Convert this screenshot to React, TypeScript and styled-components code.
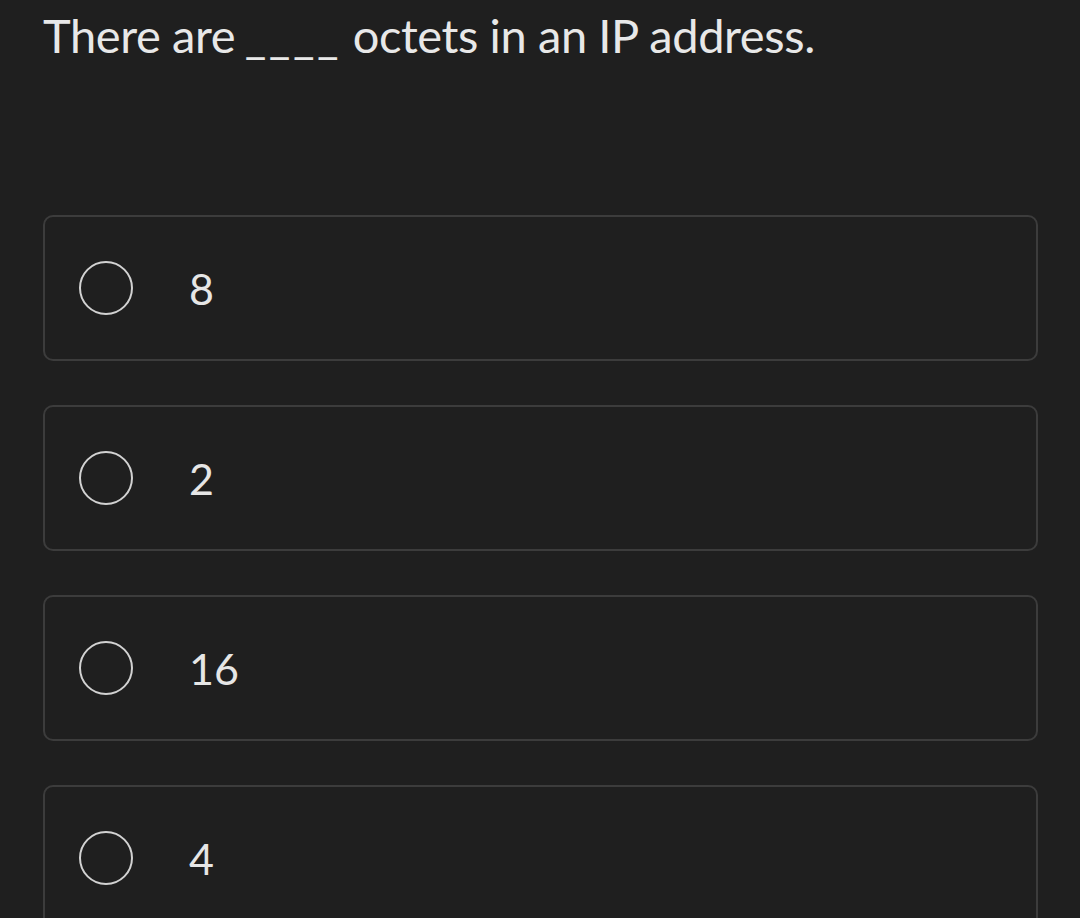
import React from 'react';
import styled, {createGlobalStyle} from "styled-components";

const options = ['8', '2', '16', '4'];

const App: React.FC = () => {
    return (
        <>
            <GlobalStyle/>
            <Page>
                <Question>There are <Blank>____</Blank> octets in an IP address.</Question>
                <OptionList>
                    {options.map(option => (
                        <OptionCard key={option}>
                            <Radio/>
                            <OptionLabel>{option}</OptionLabel>
                        </OptionCard>
                    ))}
                </OptionList>
            </Page>
        </>
    );
}

export default App;

const GlobalStyle = createGlobalStyle`
  html, body {
    margin: 0;
    padding: 0;
    background-color: #1f1f1f;
  }
  body {
    font-family: Lato, "Noto Sans", sans-serif;
    color: #e6e6e6;
  }
`

const Page = styled.div`
  display: flex;
  flex-direction: column;
  padding: 0 43px 0 43px;
  width: 1080px;
  box-sizing: border-box;
  height: 918px;
  overflow: hidden;
`

const Question = styled.h1`
  margin: 0;
  padding-top: 7px;
  font-size: 47px;
  font-weight: 400;
  line-height: 1.2;
  letter-spacing: -0.4px;
  color: #e8e8e8;
`

const Blank = styled.span`
  letter-spacing: 2.5px;
  margin-left: -2px;
`

const OptionList = styled.div`
  display: flex;
  flex-direction: column;
  gap: 44px;
  margin-top: 152px;
`

const OptionCard = styled.div`
  display: flex;
  align-items: center;
  gap: 56px;
  width: 995px;
  height: 146px;
  flex-shrink: 0;
  box-sizing: border-box;
  padding-left: 34px;
  border: 2.5px solid #3c3c3c;
  border-radius: 10px;
`

const Radio = styled.span`
  width: 54px;
  height: 54px;
  box-sizing: border-box;
  border: 2.5px solid #d2d2d2;
  border-radius: 50%;
  flex-shrink: 0;
`

const OptionLabel = styled.span`
  font-size: 43px;
  line-height: 1;
  color: #e6e6e6;
`
